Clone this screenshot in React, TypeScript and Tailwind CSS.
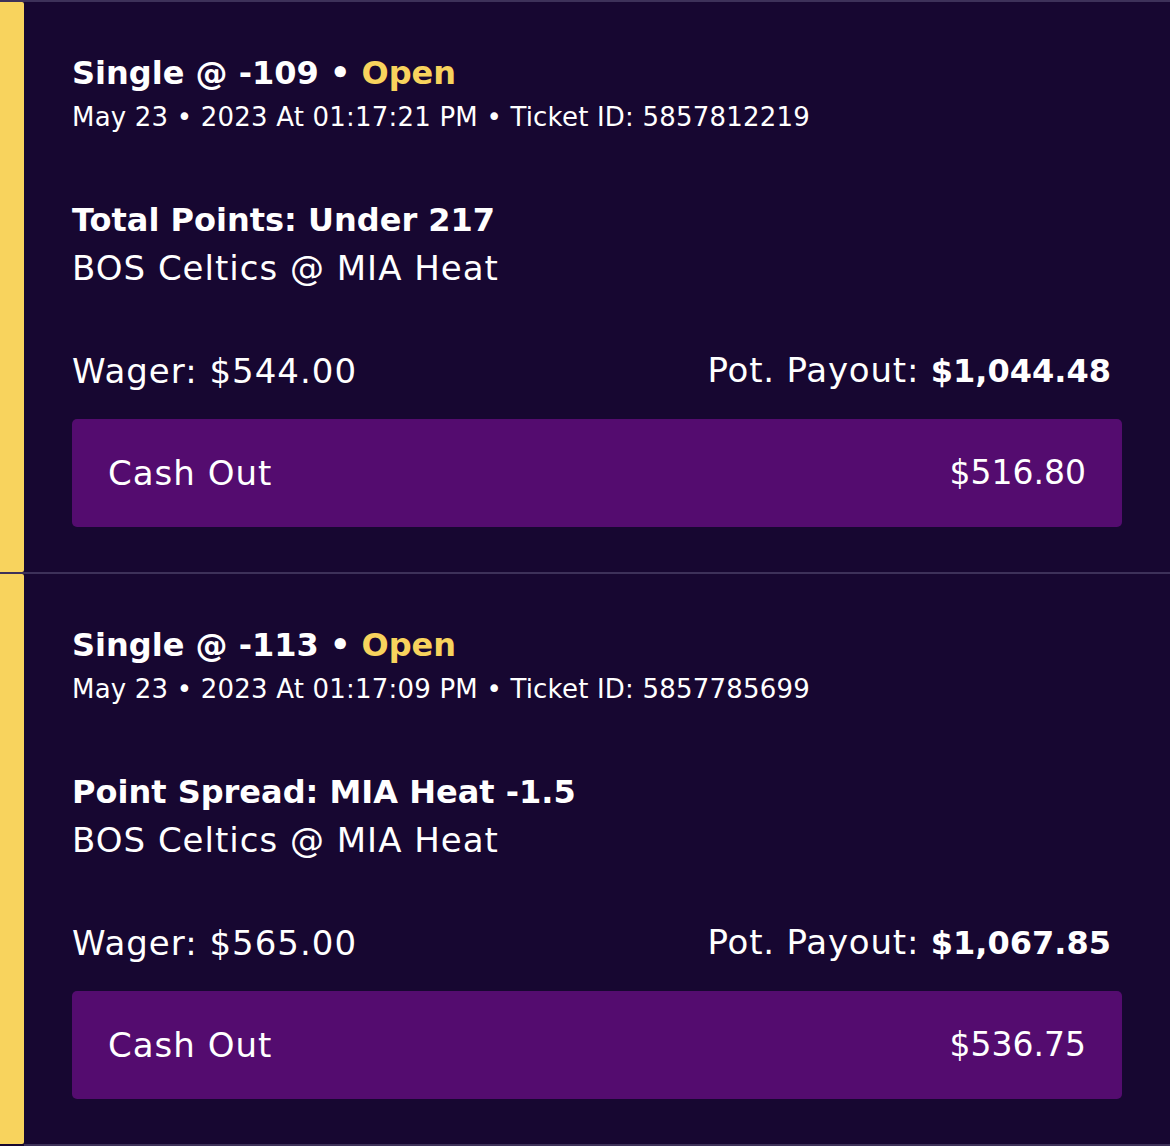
import React from 'react'

const bets = [
  {
    odds: '-109',
    date: 'May 23 • 2023 At 01:17:21 PM • Ticket ID: 5857812219',
    market: 'Total Points: Under 217',
    game: 'BOS Celtics @ MIA Heat',
    wager: '$544.00',
    payout: '$1,044.48',
    cashOut: '$516.80',
  },
  {
    odds: '-113',
    date: 'May 23 • 2023 At 01:17:09 PM • Ticket ID: 5857785699',
    market: 'Point Spread: MIA Heat -1.5',
    game: 'BOS Celtics @ MIA Heat',
    wager: '$565.00',
    payout: '$1,067.85',
    cashOut: '$536.75',
  },
]

function BetCard({ bet }: { bet: (typeof bets)[number] }) {
  return (
    <div className="flex h-[572px] border-t-2 border-[#3d3159]">
      <div className="w-[24px] shrink-0 bg-[#f8d35d] rounded-r-[2px]" />
      <div className="flex-1 pl-[48px] pr-[48px] pt-[51px]">
        <div className="text-[32px] leading-[40px] font-bold text-white">
          Single @ {bet.odds} • <span className="text-[#f8d35d]">Open</span>
        </div>
        <div className="text-[26px] leading-[34px] tracking-[0.2px] text-white mt-[7px]">{bet.date}</div>

        <div className="mt-[65px] text-[32px] leading-[42px] font-bold text-white">{bet.market}</div>
        <div className="text-[34px] leading-[42px] tracking-[1px] text-white mt-[6px]">{bet.game}</div>

        <div className="mt-[60px] flex justify-between items-center text-[34px] leading-[42px] text-white pr-[11px]">
          <span className="tracking-[1px]">Wager: {bet.wager}</span>
          <span>
            <span className="tracking-[0.8px]">Pot. Payout: </span>
            <span className="text-[32px] font-bold">{bet.payout}</span>
          </span>
        </div>

        <div className="mt-[27px] h-[108px] rounded-[5px] bg-[#540c6f] flex items-center justify-between px-[36px] text-[34px] text-white">
          <span className="tracking-[1px]">Cash Out</span>
          <span className="text-[33px]">{bet.cashOut}</span>
        </div>
      </div>
    </div>
  )
}

export default function App() {
  return (
    <div
      className="w-[1170px] h-[1146px] bg-[#170731] overflow-hidden"
      style={{ fontFamily: '"DejaVu Sans", "Open Sans", sans-serif' }}
    >
      {bets.map((bet) => (
        <BetCard key={bet.odds} bet={bet} />
      ))}
      <div className="h-[2px] bg-[#3d3159] ml-[24px]" />
    </div>
  )
}
